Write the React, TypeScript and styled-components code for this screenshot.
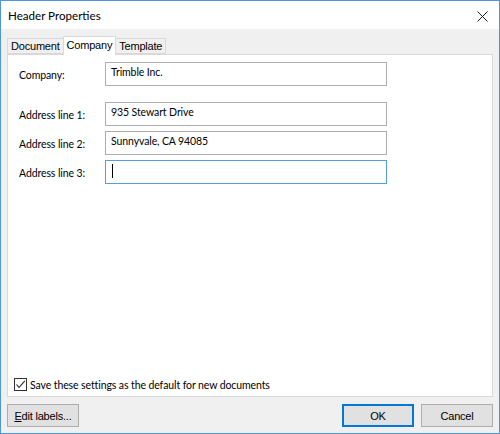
import styled, { createGlobalStyle } from "styled-components";

const GlobalStyle = createGlobalStyle`
  html, body {
    margin: 0;
    padding: 0;
    background: #ffffff;
  }
  * {
    box-sizing: border-box;
  }
`;

const uiFont = `"Lato", "Noto Sans", sans-serif`;
const classicFont = `"Liberation Sans", Arial, sans-serif`;

const fields = [
  { label: "Company:", value: "Trimble Inc.", gapTop: 0 },
  { label: "Address line 1:", value: "935 Stewart Drive", gapTop: 16 },
  { label: "Address line 2:", value: "Sunnyvale, CA 94085", gapTop: 5 },
  { label: "Address line 3:", value: "", gapTop: 5, focused: true },
];

function App() {
  return (
    <>
      <GlobalStyle />
      <StWindow>
        <StTitleBar>
          <StTitle>Header Properties</StTitle>
          <StClose>
            <svg width="11" height="11" viewBox="0 0 11 11">
              <path d="M0.5 0.5 L10.5 10.5 M10.5 0.5 L0.5 10.5" stroke="#1a1a1a" strokeWidth="1" />
            </svg>
          </StClose>
        </StTitleBar>
        <StBody>
          <StTabRow>
            <StTab>Document</StTab>
            <StTab $active>Company</StTab>
            <StTab>Template</StTab>
          </StTabRow>
          <StPanel>
            {fields.map((f) => (
              <StFieldRow key={f.label} $gapTop={f.gapTop}>
                <StLabel>{f.label}</StLabel>
                <StInput $focused={f.focused}>
                  {f.value}
                  {f.focused && <StCaret />}
                </StInput>
              </StFieldRow>
            ))}
            <StCheckRow>
              <StCheckBox>
                <svg width="11" height="11" viewBox="0 0 11 11">
                  <path d="M1.5 5.5 L4 8.5 L9.8 1.8" fill="none" stroke="#222" strokeWidth="1.1" />
                </svg>
              </StCheckBox>
              <StCheckText>Save these settings as the default for new documents</StCheckText>
            </StCheckRow>
          </StPanel>
          <StFooter>
            <StButton>
              <u>E</u>dit labels...
            </StButton>
            <StSpacer />
            <StButton $primary>OK</StButton>
            <StButton>Cancel</StButton>
          </StFooter>
        </StBody>
      </StWindow>
    </>
  );
}

const StWindow = styled.div`
  display: flex;
  flex-direction: column;
  width: 500px;
  height: 434px;
  border: 1px solid #4f97dc;
  background: #f0f0f0;
  overflow: hidden;
`;

const StTitleBar = styled.div`
  display: flex;
  align-items: center;
  justify-content: space-between;
  height: 28px;
  padding: 0 11px 0 7px;
  background: #ffffff;
  flex: none;
`;

const StTitle = styled.span`
  font-family: ${uiFont};
  font-size: 11.6px;
  color: #000000;
  padding-top: 1px;
`;

const StClose = styled.span`
  display: flex;
  align-items: center;
  padding-top: 2px;
`;

const StBody = styled.div`
  display: flex;
  flex-direction: column;
  flex: 1;
  padding: 6px 6px 0 6px;
`;

const StTabRow = styled.div`
  display: flex;
  align-items: flex-end;
  height: 19px;
  position: relative;
  z-index: 1;
`;

const StTab = styled.div<{ $active?: boolean }>`
  display: flex;
  align-items: center;
  justify-content: center;
  height: ${(p) => (p.$active ? "19px" : "16px")};
  padding: ${(p) => (p.$active ? "0 3px 2px" : "0 3px")};
  margin-left: -1px;
  margin-bottom: ${(p) => (p.$active ? "-1px" : "0")};
  background: ${(p) => (p.$active ? "#ffffff" : "#f0f0f0")};
  border: 1px solid #d9d9d9;
  border-bottom: ${(p) => (p.$active ? "none" : "1px solid #d9d9d9")};
  font-family: ${classicFont};
  font-size: 11px;
  letter-spacing: -0.2px;
  color: #000000;

  &:first-child {
    margin-left: 0;
  }
`;

const StPanel = styled.div`
  display: flex;
  flex-direction: column;
  height: 343px;
  background: #ffffff;
  border: 1px solid #d9d9d9;
  padding: 7px 6px 5px 11px;
  flex: none;
`;

const StFieldRow = styled.div<{ $gapTop: number }>`
  display: flex;
  align-items: center;
  margin-top: ${(p) => p.$gapTop}px;
`;

const StLabel = styled.span`
  width: 86px;
  flex: none;
  font-family: ${uiFont};
  font-size: 10.5px;
  letter-spacing: -0.1px;
  color: #000000;
  padding-top: 2px;
`;

const StInput = styled.div<{ $focused?: boolean }>`
  display: flex;
  align-items: flex-start;
  width: 282px;
  height: 24px;
  padding: 3px 5px 0;
  border: 1px solid ${(p) => (p.$focused ? "#569de5" : "#adadad")};
  background: #ffffff;
  font-family: ${uiFont};
  font-size: 10.5px;
  letter-spacing: -0.1px;
  color: #000000;
`;

const StCaret = styled.span`
  display: block;
  width: 1px;
  height: 14px;
  margin-top: 0;
  margin-left: 1px;
  background: #000000;
`;

const StCheckRow = styled.div`
  display: flex;
  align-items: center;
  gap: 3px;
  margin-top: auto;
  margin-left: -5px;
`;

const StCheckBox = styled.span`
  display: flex;
  align-items: center;
  justify-content: center;
  width: 13px;
  height: 13px;
  border: 1px solid #333333;
  background: #ffffff;
`;

const StCheckText = styled.span`
  font-family: ${uiFont};
  font-size: 10.5px;
  letter-spacing: -0.1px;
  color: #000000;
`;

const StFooter = styled.div`
  display: flex;
  align-items: center;
  gap: 7px;
  padding-top: 7px;
`;

const StSpacer = styled.div`
  flex: 1;
`;

const StButton = styled.button<{ $primary?: boolean }>`
  width: 72px;
  height: 23px;
  padding: 0;
  background: #e1e1e1;
  border: 1px solid ${(p) => (p.$primary ? "#0078d7" : "#adadad")};
  box-shadow: ${(p) => (p.$primary ? "inset 0 0 0 1px #0078d7" : "none")};
  font-family: ${classicFont};
  font-size: 11px;
  letter-spacing: -0.2px;
  color: #000000;

  u {
    text-decoration: underline;
  }
`;

export default App;
